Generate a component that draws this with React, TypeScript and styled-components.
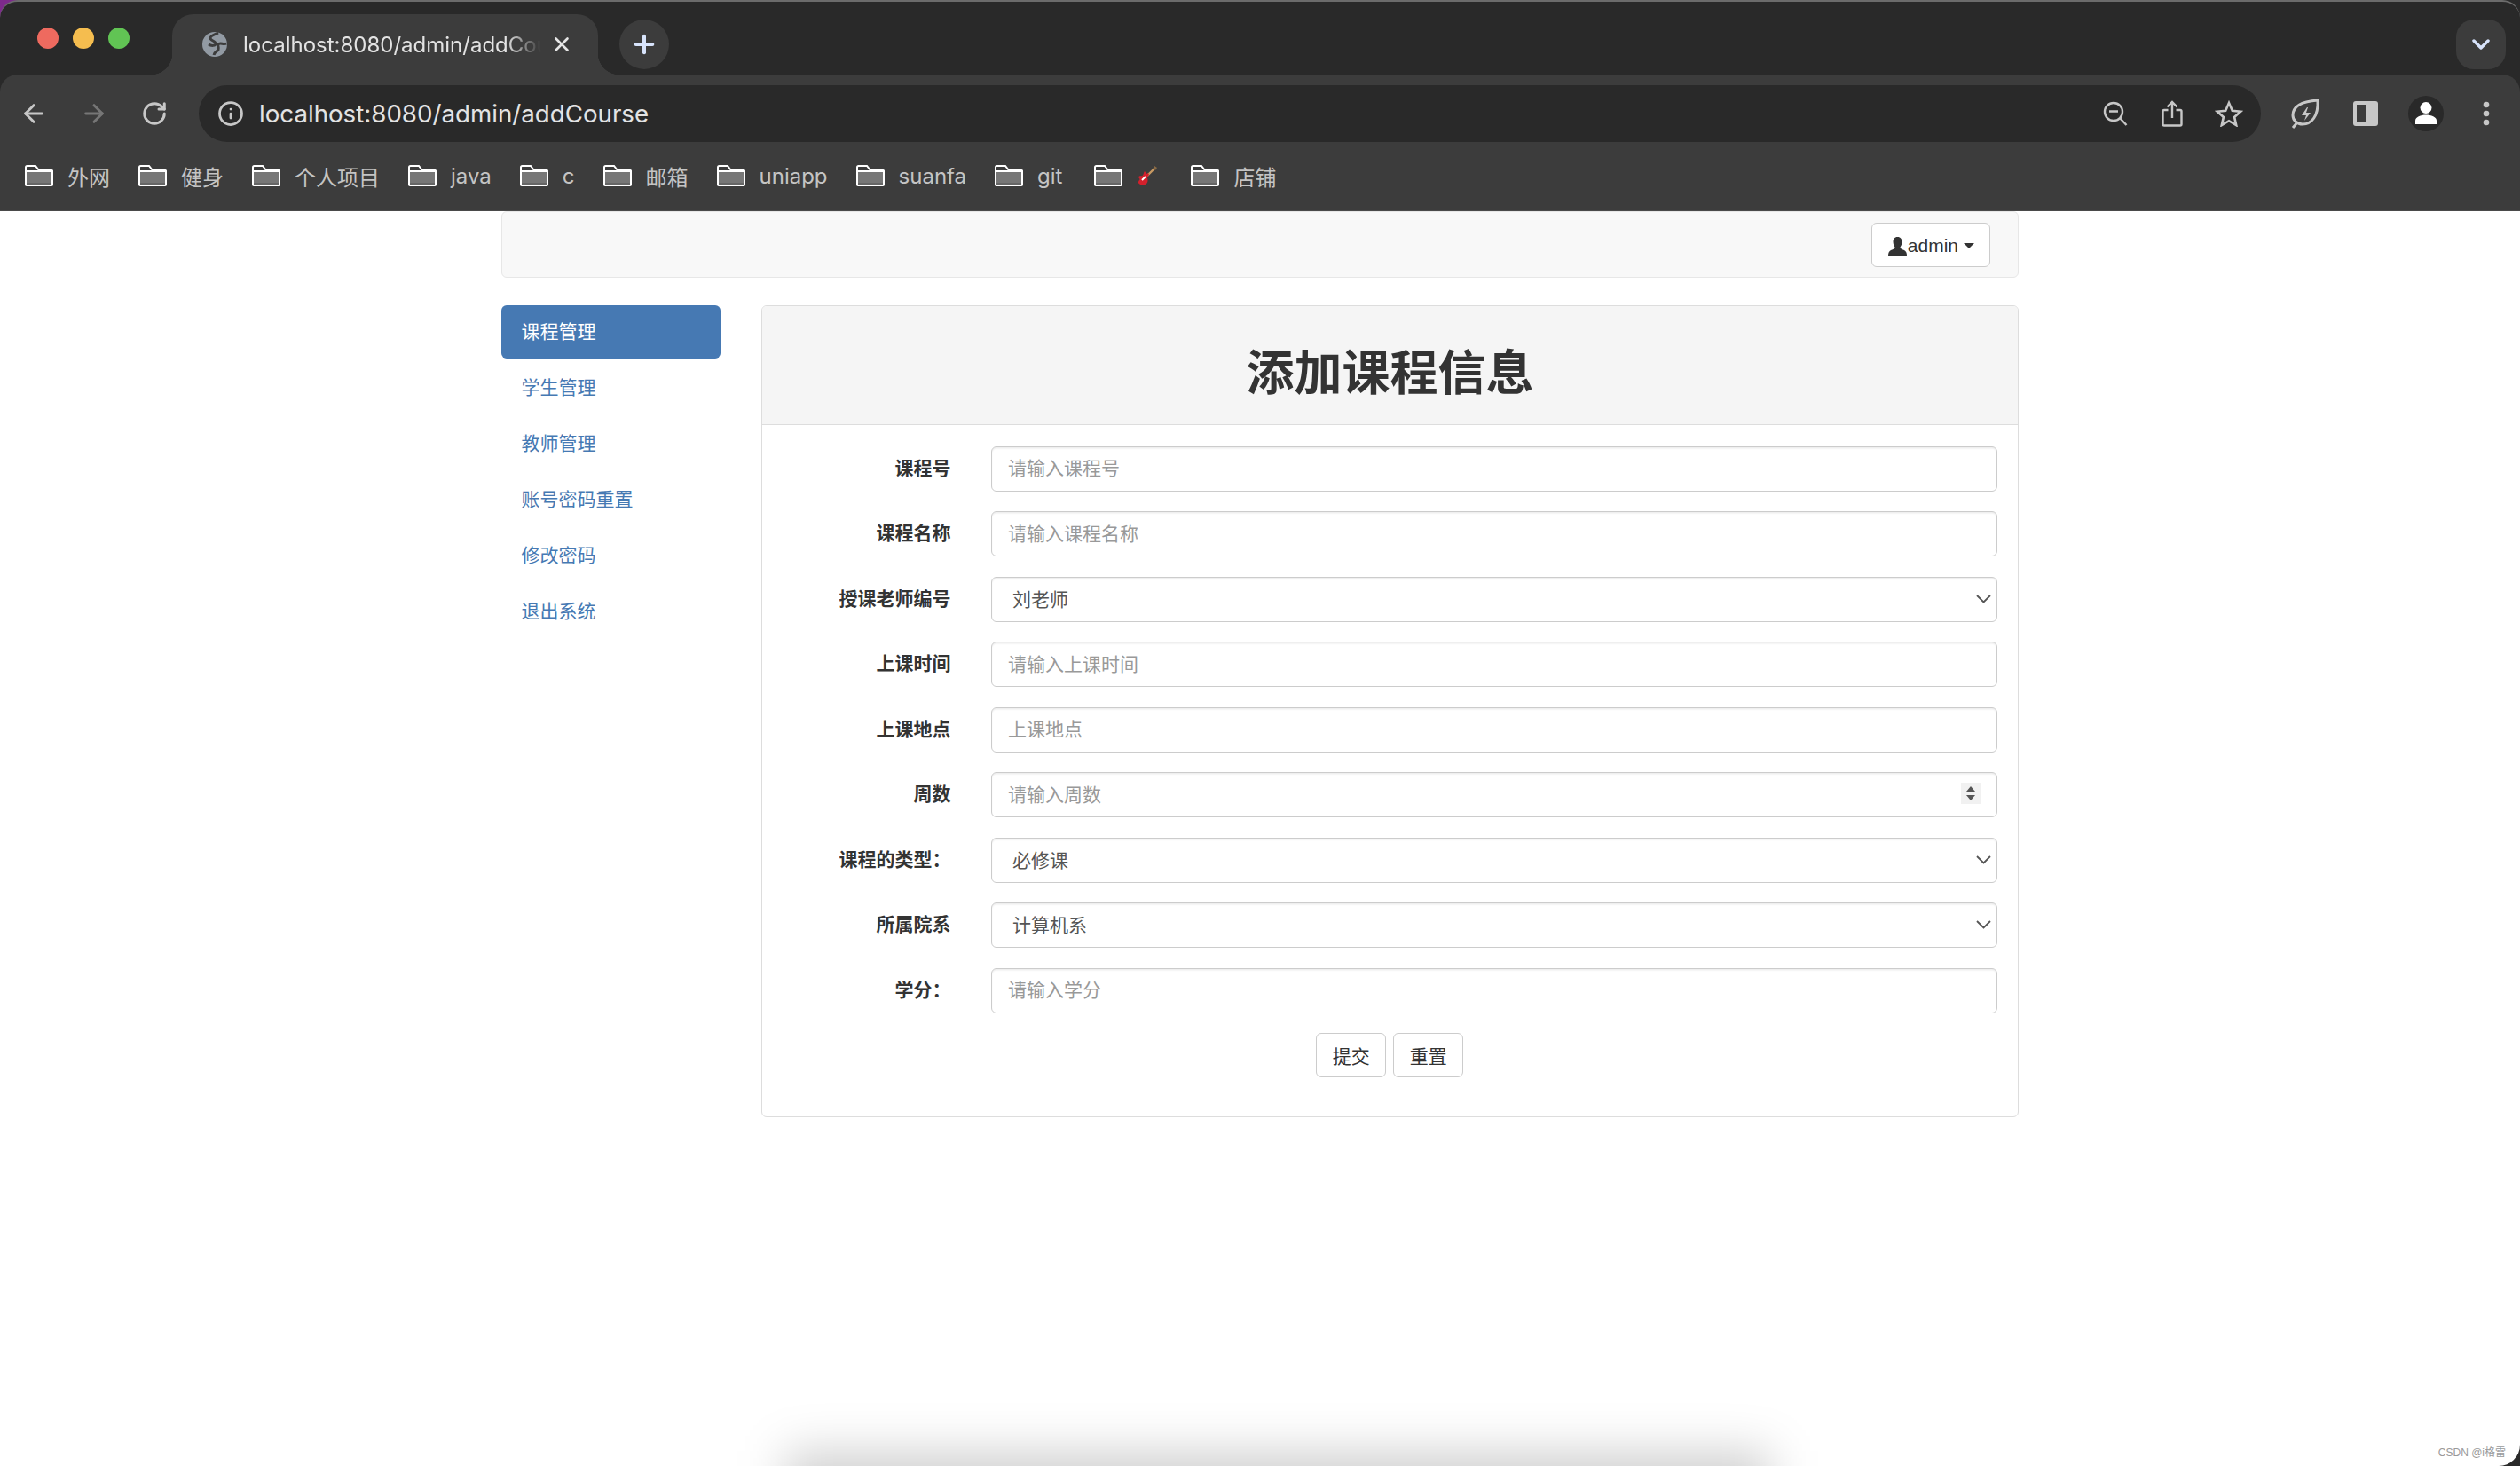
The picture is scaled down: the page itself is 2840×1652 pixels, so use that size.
import styled, { createGlobalStyle } from 'styled-components'
import { ArrowLeft, ArrowRight, ChevronDown, Info, Plus, RotateCw, X } from 'lucide-react'

const GlobalStyle = createGlobalStyle`
	* {
		box-sizing: border-box;
	}
	html,
	body {
		margin: 0;
		padding: 0;
		background: #fff;
	}
	body {
		font-family: 'Liberation Sans', 'Noto Sans CJK SC', sans-serif;
		font-size: 21px;
		color: #333;
	}
`

const Root = styled.div`
	position: relative;
	display: flex;
	flex-direction: column;
	width: 2840px;
	height: 1652px;
	overflow: hidden;
	background: linear-gradient(90deg, #7d2a8c 50%, #2a2a2a 50%);
`

/* browser chrome */
const Chrome = styled.header`
	flex: none;
	background: #292929;
	border-radius: 20px 20px 0 0;
	border-top: 2px solid #6b6b6b;
`

const TabStrip = styled.div`
	display: flex;
	align-items: flex-start;
	height: 82px;
	padding-top: 14px;
`

const Lights = styled.div`
	display: flex;
	gap: 16px;
	margin: 15px 48px 0 42px;
`

const Light = styled.span<{ $color: string }>`
	width: 24px;
	height: 24px;
	border-radius: 50%;
	background: ${(p) => p.$color};
`

const Tab = styled.div`
	position: relative;
	display: flex;
	align-items: center;
	width: 480px;
	height: 68px;
	padding: 0 0 0 34px;
	background: #3c3c3c;
	border-radius: 24px 24px 0 0;

	&::before,
	&::after {
		content: '';
		position: absolute;
		bottom: 0;
		width: 24px;
		height: 24px;
	}
	&::before {
		left: -24px;
		background: radial-gradient(circle at 0 0, transparent 24px, #3c3c3c 24.5px);
	}
	&::after {
		right: -24px;
		background: radial-gradient(circle at 100% 0, transparent 24px, #3c3c3c 24.5px);
	}
`

const TabTitle = styled.span`
	width: 336px;
	margin-left: 18px;
	overflow: hidden;
	white-space: nowrap;
	font-family: Inter, sans-serif;
	font-size: 24px;
	color: #e3e3e3;
	-webkit-mask-image: linear-gradient(90deg, #000 88%, transparent);
	mask-image: linear-gradient(90deg, #000 88%, transparent);
`

const TabClose = styled.span`
	display: flex;
	margin-left: 10px;
	color: #e6e6e6;
`

const NewTab = styled.div`
	display: flex;
	align-items: center;
	justify-content: center;
	width: 56px;
	height: 56px;
	margin: 6px 0 0 24px;
	border-radius: 50%;
	background: #3c3c3c;
	color: #d7e3fb;
`

const TabMenu = styled.div`
	display: flex;
	align-items: center;
	justify-content: center;
	width: 56px;
	height: 56px;
	margin: 6px 16px 0 auto;
	border-radius: 20px;
	background: #3c3c3c;
	color: #d7e3fb;
`

const Toolbar = styled.div`
	background: #3c3c3c;
	border-radius: 20px 20px 0 0;
`

const NavRow = styled.div`
	display: flex;
	align-items: center;
	height: 76px;
	padding: 12px 4px 0;
`

const ToolButton = styled.div<{ $dim?: boolean; $w?: number }>`
	flex: none;
	display: flex;
	align-items: center;
	justify-content: center;
	width: ${(p) => p.$w ?? 68}px;
	height: 64px;
	color: ${(p) => (p.$dim ? '#767676' : '#c7c7c7')};
`

const AddressBar = styled.div`
	flex: 1;
	display: flex;
	align-items: center;
	height: 64px;
	margin: 0 16px;
	padding: 0 4px 0 18px;
	border-radius: 32px;
	background: #292929;
`

const InfoSlot = styled.span`
	display: flex;
	justify-content: center;
	width: 36px;
	color: #c7c7c7;
`

const Url = styled.span`
	flex: 1;
	margin-left: 14px;
	font-family: Inter, sans-serif;
	font-size: 27.7px;
	color: #e3e3e3;
`

const Bookmarks = styled.div`
	display: flex;
	align-items: center;
	gap: 32px;
	height: 78px;
	padding: 0 0 1px 28px;
	border-bottom: 1px solid #4a4a4a;
`

const Bookmark = styled.div<{ $extra?: number }>`
	display: flex;
	align-items: center;
	gap: 16px;
	margin-right: ${(p) => p.$extra ?? 0}px;
	font-family: Inter, 'Noto Sans CJK SC', sans-serif;
	font-size: 24px;
	color: #c4c4c4;
	white-space: nowrap;
`

/* the page itself */
const Page = styled.main`
	flex: 1;
	background: #fff;
	border-radius: 0 0 24px 0;
`

const Container = styled.div`
	width: 1710px;
	margin: 0 auto;
`

const Navbar = styled.nav`
	display: flex;
	align-items: center;
	justify-content: flex-end;
	height: 75px;
	margin-bottom: 31px;
	padding: 1px 31px 0 0;
	background: #f8f8f8;
	border: 1.5px solid #e7e7e7;
	border-radius: 6px;
`

const Button = styled.button`
	display: inline-flex;
	align-items: center;
	height: 50px;
	padding: 0 17px;
	background: #fff;
	border: 1.5px solid #ccc;
	border-radius: 6px;
	font-family: inherit;
	font-size: 21px;
	color: #333;
`

const UserButton = styled(Button)`
	padding: 2px 17px 0 18px;
`

const UserName = styled.span`
	margin-left: 1px;
`

const Caret = styled.span`
	width: 0;
	height: 0;
	margin-left: 6px;
	border-top: 6px solid #333;
	border-left: 6px solid transparent;
	border-right: 6px solid transparent;
`

const Layout = styled.div`
	display: grid;
	grid-template-columns: 247px 1fr;
	gap: 46px;
	align-items: start;
`

const SideNav = styled.ul`
	display: flex;
	flex-direction: column;
	gap: 3px;
	margin: 0;
	padding: 0;
	list-style: none;
`

const SideLink = styled.li<{ $active?: boolean }>`
	height: 60px;
	padding: 0 22.5px;
	line-height: 60px;
	border-radius: 6px;
	background: ${(p) => (p.$active ? '#4679b3' : 'transparent')};
	color: ${(p) => (p.$active ? '#fff' : '#4679b3')};
`

const Panel = styled.section`
	height: 915px;
	border: 1.5px solid #ddd;
	border-radius: 6px;
`

const PanelHeading = styled.div`
	display: flex;
	align-items: center;
	justify-content: center;
	height: 133.5px;
	padding-top: 20px;
	background: #f5f5f5;
	border-bottom: 1.5px solid #ddd;
	border-radius: 5px 5px 0 0;
`

const Title = styled.h2`
	margin: 0;
	font-size: 54px;
	line-height: 1.1;
	font-weight: 700;
	color: #333;
`

const Form = styled.form`
	padding: 24px 23px 0 22.5px;
`

const Row = styled.div`
	display: grid;
	grid-template-columns: 190px 1fr;
	gap: 45.5px;
	align-items: center;
	margin-bottom: 22.5px;
`

const Label = styled.label`
	padding-bottom: 5px;
	font-weight: 700;
	text-align: right;
	color: #333;
`

const Field = styled.div`
	position: relative;
	height: 51px;
`

const controlStyle = `
	display: block;
	width: 100%;
	height: 51px;
	background: #fff;
	border: 1.5px solid #ccc;
	border-radius: 6px;
	box-shadow: inset 0 1.5px 1.5px rgba(0, 0, 0, 0.075);
	font-family: inherit;
	font-size: 21px;
	color: #555;
	outline: none;
`

const Input = styled.input`
	${controlStyle}
	padding: 0 18px;
	-moz-appearance: textfield;

	&::placeholder {
		color: #999;
		opacity: 1;
	}
	&::-webkit-inner-spin-button,
	&::-webkit-outer-spin-button {
		-webkit-appearance: none;
		margin: 0;
	}
`

const Select = styled.select`
	${controlStyle}
	appearance: none;
	-webkit-appearance: none;
	padding: 0 18px 0 23px;
`

const SelectArrow = styled.svg`
	position: absolute;
	top: 20px;
	right: 7px;
	width: 17px;
	height: 10px;
	pointer-events: none;
`

const Spinner = styled.div`
	position: absolute;
	top: 12px;
	right: 19px;
	display: flex;
	flex-direction: column;
	align-items: center;
	justify-content: center;
	gap: 4px;
	width: 22px;
	height: 24px;
	background: #f1f1f1;
`

const SpinUp = styled.span`
	width: 0;
	height: 0;
	border-bottom: 6px solid #555;
	border-left: 5.5px solid transparent;
	border-right: 5.5px solid transparent;
`

const SpinDown = styled.span`
	width: 0;
	height: 0;
	border-top: 6px solid #555;
	border-left: 5.5px solid transparent;
	border-right: 5.5px solid transparent;
`

const Actions = styled.div`
	display: flex;
	justify-content: center;
	gap: 8px;
`

const FormButton = styled(Button)`
	height: 49.5px;
	padding: 0 17.5px;
`

/* window shadow that leaks in at the bottom of the capture */
const BottomShadow = styled.div`
	position: absolute;
	left: 885px;
	top: 1635px;
	width: 1110px;
	height: 90px;
	background: rgba(0, 0, 0, 0.18);
	filter: blur(26px);
`

const Watermark = styled.span`
	position: absolute;
	right: 16px;
	bottom: 8px;
	font-size: 12px;
	color: #9a9a9a;
`

const GuitarSvg = styled.svg`
	margin-right: 5px;
`

function Folder() {
	return (
		<svg width='32' height='24' viewBox='0 0 32 24'>
			<path d='M2 7h28v15H2z' fill='#777' />
			<path d='M2 20h28v2H2z' fill='#666' />
			<path
				d='M1 22V2.500C1 1.700 1.700 1 2.500 1H12l4 5h14.500c.300 0 .500.200.500.500V22c0 .600-.400 1-1 1H2c-.600 0-1-.400-1-1zM1 7h30'
				fill='none'
				stroke='#fff'
				strokeWidth='2'
			/>
		</svg>
	)
}

function Guitar() {
	return (
		<GuitarSvg width='24' height='24' viewBox='0 0 24 24'>
			<path d='M11 13L21 3' stroke='#c89a62' strokeWidth='2.400' />
			<path d='M20 1l3 2-2 3-2-2z' fill='#8a6a45' />
			<path
				d='M9 7l2 3 2-1 1 2-2 3 .500 3c.200 3-2 5.500-5 5.500S1.500 21 2 19c.300-1.500 1.500-2 1.500-3S1 14 3 12.500c1.500-1 3 .500 4-1S8 8 9 7z'
				fill='#d3202c'
			/>
			<path d='M6 17l4-4' stroke='#fff' strokeWidth='2' />
		</GuitarSvg>
	)
}

function Globe() {
	return (
		<svg width='28' height='28' viewBox='0 0 28 28'>
			<circle cx='14' cy='14' r='14' fill='#929aa3' />
			<path d='M18 1c-4 2-9 3-9 6 0 3 6 3 6 6s-5 3-8 1' stroke='#3c3c3c' strokeWidth='3' fill='none' />
			<path d='M27 13c-3 2-7-2-9 1-1 2 1 3 0 6-1 2-4 2-5 6' stroke='#3c3c3c' strokeWidth='3' fill='none' />
		</svg>
	)
}

function ZoomOutIcon() {
	return (
		<svg width='28' height='28' viewBox='0 0 28 28' fill='none' stroke='#c7c7c7' strokeWidth='2.400'>
			<circle cx='12' cy='12' r='10' />
			<path d='M7 11.500h10M19 19l7.500 8' />
		</svg>
	)
}

function ShareIcon() {
	return (
		<svg width='24' height='30' viewBox='0 0 24 30' fill='none' stroke='#c7c7c7' strokeWidth='2.400'>
			<path d='M7.500 11H3c-1 0-1.500.500-1.500 1.500V27c0 1 .500 1.500 1.500 1.500h18c1 0 1.500-.500 1.500-1.500V12.500c0-1-.500-1.500-1.500-1.500h-4.500' />
			<path d='M12 20V2M6.500 7.500L12 2l5.500 5.500' />
		</svg>
	)
}

function StarIcon() {
	return (
		<svg width='32' height='30' viewBox='0 0 32 30' fill='none' stroke='#c7c7c7' strokeWidth='2.600'>
			<path d='M16 3l3.800 8.800 9.400.900-7.100 6.200 2.100 9.200L16 23.200l-8.200 4.900 2.100-9.200-7.100-6.200 9.400-.900z' />
		</svg>
	)
}

function LeafIcon() {
	return (
		<svg width='34' height='34' viewBox='0 0 34 34' fill='none' stroke='#c7c7c7' strokeWidth='3'>
			<path d='M31 2C17 3 3 7 3 19c0 6 5 10 11 10 10 0 18-9 17-27z' />
			<path d='M8 27l-5 6' />
			<path d='M19 10l-6 9h5l-2 6 7-9h-5l2-6z' fill='#c7c7c7' stroke='none' />
		</svg>
	)
}

function SidePanelIcon() {
	return (
		<svg width='28' height='28' viewBox='0 0 28 28'>
			<rect width='28' height='28' rx='3' fill='#c7c7c7' />
			<rect x='4' y='4' width='11' height='20' fill='#3c3c3c' />
		</svg>
	)
}

function ProfileIcon() {
	return (
		<svg width='40' height='40' viewBox='0 0 40 40'>
			<circle cx='20' cy='20' r='20' fill='#292929' />
			<circle cx='20' cy='13.500' r='6.500' fill='#fff' />
			<path d='M8 32v-4c0-4 6-6.500 12-6.500S32 24 32 28v4z' fill='#fff' />
		</svg>
	)
}

function MenuIcon() {
	return (
		<svg width='8' height='30' viewBox='0 0 8 30' fill='#c7c7c7'>
			<circle cx='4' cy='5' r='3.300' />
			<circle cx='4' cy='15' r='3.300' />
			<circle cx='4' cy='25' r='3.300' />
		</svg>
	)
}

function UserIcon() {
	return (
		<svg width='21' height='21' viewBox='0 0 21 21' fill='#333'>
			<path d='M10.500 0C7 0 5.500 2.500 5.500 5.500c0 2.500 1 4.500 2 6 0 1.500-1.500 2.500-4.500 3.500-2 1-3 3-3 6h21c0-3-1-5-3-6-3-1-4.500-2-4.500-3.500 1-1.500 2-3.500 2-6C15.500 2.500 14 0 10.500 0z' />
		</svg>
	)
}

const bookmarks = [
	{ name: '外网' },
	{ name: '健身' },
	{ name: '个人项目' },
	{ name: 'java' },
	{ name: 'c' },
	{ name: '邮箱' },
	{ name: 'uniapp' },
	{ name: 'suanfa' },
	{ name: 'git', extra: 4 },
	{ name: '🎸' },
	{ name: '店铺' },
]
const sideLinks = ['课程管理', '学生管理', '教师管理', '账号密码重置', '修改密码', '退出系统']

type FieldDef =
	| { label: string; kind: 'text' | 'number'; placeholder: string }
	| { label: string; kind: 'select'; options: string[] }

const fields: FieldDef[] = [
	{ label: '课程号', kind: 'text', placeholder: '请输入课程号' },
	{ label: '课程名称', kind: 'text', placeholder: '请输入课程名称' },
	{ label: '授课老师编号', kind: 'select', options: ['刘老师'] },
	{ label: '上课时间', kind: 'text', placeholder: '请输入上课时间' },
	{ label: '上课地点', kind: 'text', placeholder: '上课地点' },
	{ label: '周数', kind: 'number', placeholder: '请输入周数' },
	{ label: '课程的类型：', kind: 'select', options: ['必修课', '选修课'] },
	{ label: '所属院系', kind: 'select', options: ['计算机系'] },
	{ label: '学分：', kind: 'text', placeholder: '请输入学分' },
]

function FormField({ field }: { field: FieldDef }) {
	if (field.kind === 'select') {
		return (
			<Field>
				<Select defaultValue={field.options[0]}>
					{field.options.map((o) => (
						<option key={o}>{o}</option>
					))}
				</Select>
				<SelectArrow viewBox='0 0 17 10' fill='none' stroke='#555' strokeWidth='1.800'>
					<path d='M1 1l7.500 7.500L16 1' />
				</SelectArrow>
			</Field>
		)
	}
	return (
		<Field>
			<Input type={field.kind} placeholder={field.placeholder} />
			{field.kind === 'number' && (
				<Spinner>
					<SpinUp />
					<SpinDown />
				</Spinner>
			)}
		</Field>
	)
}

export default function App() {
	return (
		<Root>
			<GlobalStyle />
			<Chrome>
				<TabStrip>
					<Lights>
						<Light $color='#ee6a5f' />
						<Light $color='#f5bd4f' />
						<Light $color='#61c454' />
					</Lights>
					<Tab>
						<Globe />
						<TabTitle>localhost:8080/admin/addCourse</TabTitle>
						<TabClose>
							<X size={26} strokeWidth={2.4} />
						</TabClose>
					</Tab>
					<NewTab>
						<Plus size={32} strokeWidth={3} />
					</NewTab>
					<TabMenu>
						<ChevronDown size={32} strokeWidth={2.6} />
					</TabMenu>
				</TabStrip>
				<Toolbar>
					<NavRow>
						<ToolButton>
							<ArrowLeft size={32} strokeWidth={2.2} />
						</ToolButton>
						<ToolButton $dim>
							<ArrowRight size={32} strokeWidth={2.2} />
						</ToolButton>
						<ToolButton>
							<RotateCw size={30} strokeWidth={2.4} />
						</ToolButton>
						<AddressBar>
							<InfoSlot>
								<Info size={30} strokeWidth={2.2} />
							</InfoSlot>
							<Url>localhost:8080/admin/addCourse</Url>
							<ToolButton $w={64}>
								<ZoomOutIcon />
							</ToolButton>
							<ToolButton $w={64}>
								<ShareIcon />
							</ToolButton>
							<ToolButton $w={64}>
								<StarIcon />
							</ToolButton>
						</AddressBar>
						<ToolButton>
							<LeafIcon />
						</ToolButton>
						<ToolButton>
							<SidePanelIcon />
						</ToolButton>
						<ToolButton>
							<ProfileIcon />
						</ToolButton>
						<ToolButton>
							<MenuIcon />
						</ToolButton>
					</NavRow>
					<Bookmarks>
						{bookmarks.map((b) => (
							<Bookmark key={b.name} $extra={b.extra}>
								<Folder />
								{b.name === '🎸' ? <Guitar /> : b.name}
							</Bookmark>
						))}
					</Bookmarks>
				</Toolbar>
			</Chrome>
			<Page>
				<Container>
					<Navbar>
						<UserButton type='button'>
							<UserIcon />
							<UserName>admin</UserName>
							<Caret />
						</UserButton>
					</Navbar>
					<Layout>
						<SideNav>
							{sideLinks.map((l, i) => (
								<SideLink key={l} $active={i === 0}>
									{l}
								</SideLink>
							))}
						</SideNav>
						<Panel>
							<PanelHeading>
								<Title>添加课程信息</Title>
							</PanelHeading>
							<Form>
								{fields.map((f) => (
									<Row key={f.label}>
										<Label>{f.label}</Label>
										<FormField field={f} />
									</Row>
								))}
								<Actions>
									<FormButton type='submit'>提交</FormButton>
									<FormButton type='reset'>重置</FormButton>
								</Actions>
							</Form>
						</Panel>
					</Layout>
				</Container>
			</Page>
			<BottomShadow />
			<Watermark>CSDN @i格雷</Watermark>
		</Root>
	)
}
